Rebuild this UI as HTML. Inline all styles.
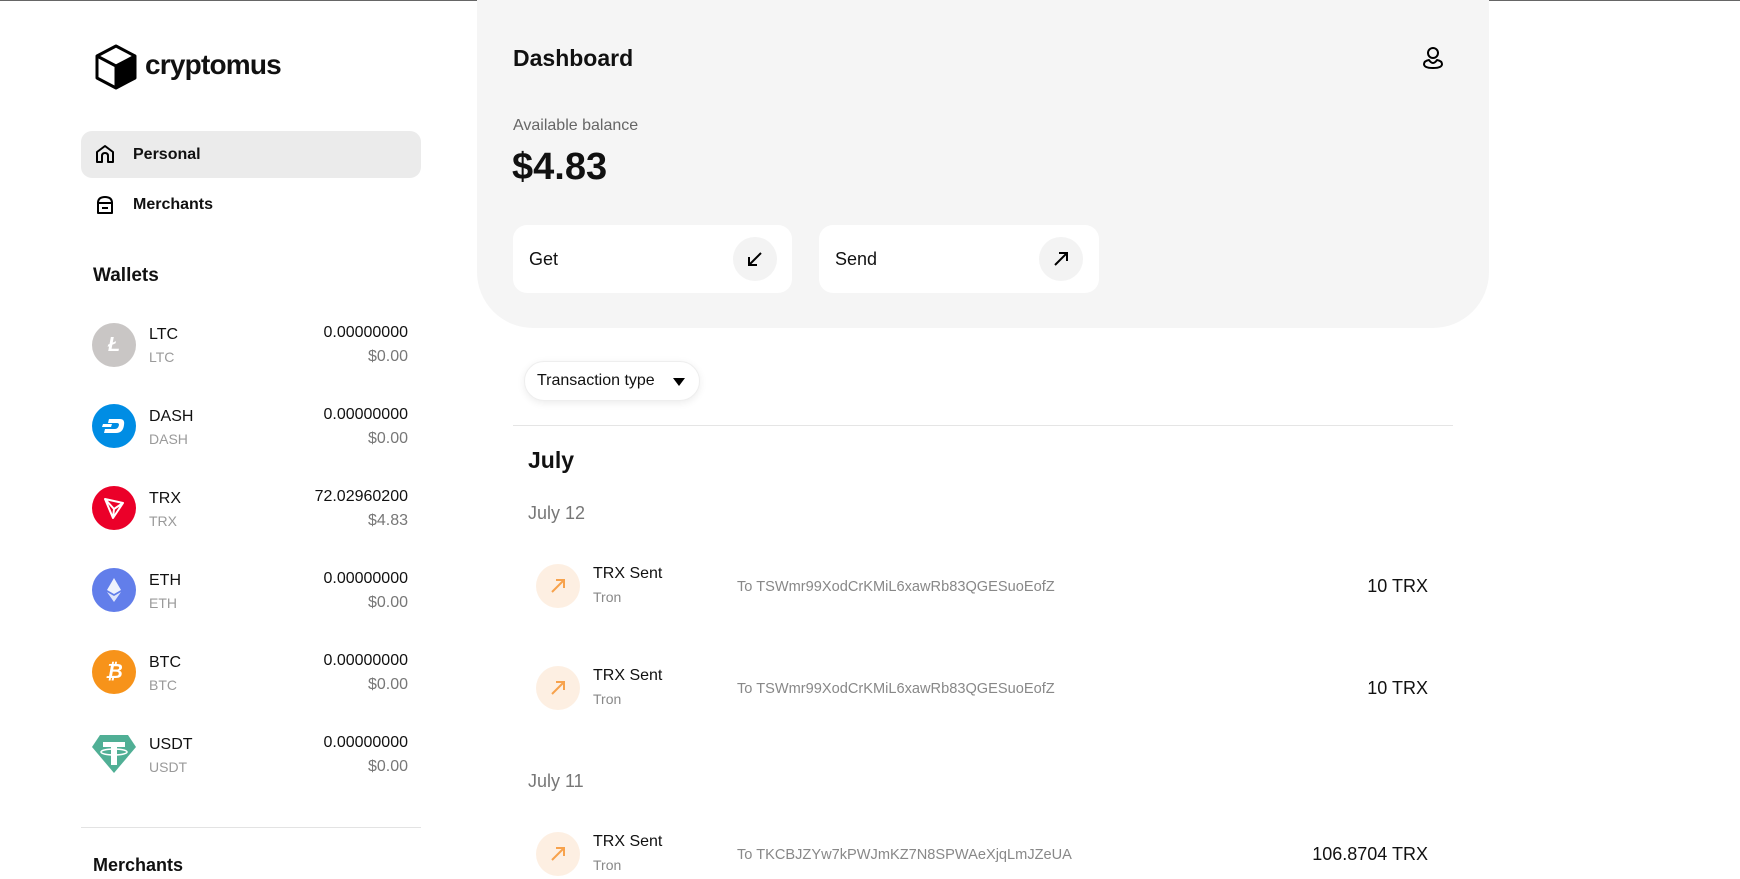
<!DOCTYPE html>
<html><head><meta charset="utf-8"><style>
*{margin:0;padding:0;box-sizing:border-box}
body{width:1740px;height:879px;overflow:hidden;background:#fff;font-family:"Liberation Sans",sans-serif;color:#111;position:relative;border-top:1px solid #666}
.a{position:absolute;white-space:nowrap}
.ic{position:absolute;width:44px;height:44px;border-radius:50%;display:flex;align-items:center;justify-content:center}
.wn{font-size:16px;color:#111}
.ws{font-size:14px;color:#9a9a9a}
.wv{font-size:16px;text-align:right;right:1332px}
.gr{color:#777}
.tx{position:absolute;width:44px;height:44px;border-radius:50%;background:#fdefe2}
</style></head><body>
<svg class="a" style="left:94px;top:43px" width="44" height="46" viewBox="0 0 44 46"><path d="M22 2 L41 12 L41 34 L22 44 L3 34 L3 12 Z" fill="#fff" stroke="#000" stroke-width="3" stroke-linejoin="round"/><path d="M3 12 L22 22 L41 12 M22 22 L22 44" fill="none" stroke="#000" stroke-width="3"/><path d="M22 22 L41 12 L41 34 L22 44Z" fill="#000"/></svg>
<div class="a" style="left:145px;top:48px;font-size:28px;font-weight:bold;letter-spacing:-0.8px">cryptomus</div>
<div class="a" style="left:81px;top:130px;width:340px;height:47px;border-radius:11px;background:#ebebeb"></div>
<svg class="a" style="left:95px;top:143px" width="20" height="20" viewBox="0 0 20 20"><path d="M2 18 V8 L10 2 L18 8 V18 H13 V12 Q13 9 10 9 Q7 9 7 12 V18 Z" fill="none" stroke="#000" stroke-width="2" stroke-linejoin="round"/></svg>
<div class="a" style="left:133px;top:145px;font-size:16px;font-weight:bold">Personal</div>
<svg class="a" style="left:95px;top:194px" width="20" height="20" viewBox="0 0 20 20"><path d="M3 8 Q3 2 10 2 Q17 2 17 8 M2 8 H18 M3 8 V18 H17 V8 M7 13 H13" fill="none" stroke="#000" stroke-width="2" stroke-linejoin="round"/></svg>
<div class="a" style="left:133px;top:195px;font-size:16px;font-weight:bold">Merchants</div>
<div class="a" style="left:93px;top:264px;font-size:19px;font-weight:bold">Wallets</div>

<div class="ic" style="left:92px;top:322px;background:#c9c6c5;color:#fff;font-weight:bold;font-size:20px;font-style:italic">Ł</div>
<div class="a wn" style="left:149px;top:325px">LTC</div><div class="a ws" style="left:149px;top:348px">LTC</div>
<div class="a wv" style="top:323px">0.00000000</div><div class="a wv gr" style="top:347px">$0.00</div>

<div class="ic" style="left:92px;top:403px;background:#008de4"><svg width="26" height="18" viewBox="0 0 26 18"><path d="M8 2 H19 Q24 2 23 8 Q22 16 15 16 H3 L4 12 H14 Q17 12 18 8 Q18 6 16 6 H7 Z M2 7 H11 L10 10 H1 Z" fill="#fff"/></svg></div>
<div class="a wn" style="left:149px;top:407px">DASH</div><div class="a ws" style="left:149px;top:430px">DASH</div>
<div class="a wv" style="top:405px">0.00000000</div><div class="a wv gr" style="top:429px">$0.00</div>

<div class="ic" style="left:92px;top:485px;background:#eb0029"><svg width="24" height="24" viewBox="0 0 24 24"><path d="M3 3 L21 7 L11 22 Z M3 3 L12 13 L21 7 M12 13 L11 22" fill="none" stroke="#fff" stroke-width="2" stroke-linejoin="round"/></svg></div>
<div class="a wn" style="left:149px;top:489px">TRX</div><div class="a ws" style="left:149px;top:512px">TRX</div>
<div class="a wv" style="top:487px">72.02960200</div><div class="a wv gr" style="top:511px">$4.83</div>

<div class="ic" style="left:92px;top:567px;background:#627eea"><svg width="16" height="26" viewBox="0 0 16 26"><path d="M8 1 L15 13 L8 17 L1 13 Z" fill="#fff" opacity=".9"/><path d="M8 19 L15 15 L8 25 L1 15 Z" fill="#fff" opacity=".8"/></svg></div>
<div class="a wn" style="left:149px;top:571px">ETH</div><div class="a ws" style="left:149px;top:594px">ETH</div>
<div class="a wv" style="top:569px">0.00000000</div><div class="a wv gr" style="top:593px">$0.00</div>

<div class="ic" style="left:92px;top:649px;background:#f7931a;color:#fff;font-weight:bold;font-size:20px;font-style:italic">₿</div>
<div class="a wn" style="left:149px;top:653px">BTC</div><div class="a ws" style="left:149px;top:676px">BTC</div>
<div class="a wv" style="top:651px">0.00000000</div><div class="a wv gr" style="top:675px">$0.00</div>

<svg class="a" style="left:92px;top:733px" width="44" height="40" viewBox="0 0 44 40"><path d="M8 1 H36 L44 13 L22 39 L0 13 Z" fill="#50af95"/><path d="M11 8 H33 V13 H25 V31 H19 V13 H11 Z" fill="#fff"/><ellipse cx="22" cy="18" rx="13" ry="3" fill="none" stroke="#fff" stroke-width="1.5"/></svg>
<div class="a wn" style="left:149px;top:735px">USDT</div><div class="a ws" style="left:149px;top:758px">USDT</div>
<div class="a wv" style="top:733px">0.00000000</div><div class="a wv gr" style="top:757px">$0.00</div>

<div class="a" style="left:81px;top:826px;width:340px;height:1px;background:#e3e3e3"></div>
<div class="a" style="left:93px;top:854px;font-size:18px;font-weight:bold">Merchants</div>

<div class="a" style="left:477px;top:-1px;width:1012px;height:328px;background:#f5f5f5;border-radius:0 0 56px 56px"></div>
<div class="a" style="left:513px;top:44px;font-size:23px;font-weight:bold">Dashboard</div>
<svg class="a" style="left:1422px;top:45px" width="22" height="24" viewBox="0 0 22 24"><circle cx="11" cy="7" r="5" fill="none" stroke="#000" stroke-width="2"/><path d="M7 14 Q2 15 2 18 Q2 22 11 22 Q20 22 20 18 Q20 15 15 14 Q13 17 11 17 Q9 17 7 14Z" fill="none" stroke="#000" stroke-width="2" stroke-linejoin="round"/></svg>
<div class="a" style="left:513px;top:116px;font-size:16px;color:#666">Available balance</div>
<div class="a" style="left:512px;top:145px;font-size:38px;font-weight:bold">$4.83</div>

<div class="a" style="left:513px;top:224px;width:279px;height:68px;background:#fff;border-radius:14px"></div>
<div class="a" style="left:529px;top:248px;font-size:18px">Get</div>
<div class="ic" style="left:733px;top:236px;background:#f3f3f3"><svg width="18" height="18" viewBox="0 0 18 18"><path d="M15 3 L3 15 M3 7 V15 H11" fill="none" stroke="#000" stroke-width="2"/></svg></div>
<div class="a" style="left:819px;top:224px;width:280px;height:68px;background:#fff;border-radius:14px"></div>
<div class="a" style="left:835px;top:248px;font-size:18px">Send</div>
<div class="ic" style="left:1039px;top:236px;background:#f3f3f3"><svg width="18" height="18" viewBox="0 0 18 18"><path d="M3 15 L15 3 M7 3 H15 V11" fill="none" stroke="#000" stroke-width="2"/></svg></div>

<div class="a" style="left:524px;top:360px;width:176px;height:40px;border-radius:20px;background:#fff;box-shadow:0 2px 8px rgba(0,0,0,.08);border:1px solid #eee"></div>
<div class="a" style="left:537px;top:371px;font-size:16px">Transaction type</div>
<div class="a" style="left:673px;top:377px;width:0;height:0;border-left:6px solid transparent;border-right:6px solid transparent;border-top:8px solid #000"></div>
<div class="a" style="left:513px;top:424px;width:940px;height:1px;background:#e5e5e5"></div>

<div class="a" style="left:528px;top:446px;font-size:23px;font-weight:bold">July</div>
<div class="a" style="left:528px;top:502px;font-size:18px;color:#777">July 12</div>

<div class="tx" style="left:536px;top:563px"></div>
<svg class="a" style="left:549px;top:576px" width="18" height="18" viewBox="0 0 18 18"><path d="M3 15 L15 3 M7 3 H15 V11" fill="none" stroke="#f7a24c" stroke-width="2"/></svg>
<div class="a" style="left:593px;top:564px;font-size:16px">TRX Sent</div>
<div class="a" style="left:593px;top:588px;font-size:14px;color:#888">Tron</div>
<div class="a" style="left:737px;top:578px;font-size:14.6px;color:#888">To TSWmr99XodCrKMiL6xawRb83QGESuoEofZ</div>
<div class="a" style="right:312px;top:575px;font-size:18px">10 TRX</div>

<div class="tx" style="left:536px;top:665px"></div>
<svg class="a" style="left:549px;top:678px" width="18" height="18" viewBox="0 0 18 18"><path d="M3 15 L15 3 M7 3 H15 V11" fill="none" stroke="#f7a24c" stroke-width="2"/></svg>
<div class="a" style="left:593px;top:666px;font-size:16px">TRX Sent</div>
<div class="a" style="left:593px;top:690px;font-size:14px;color:#888">Tron</div>
<div class="a" style="left:737px;top:680px;font-size:14.6px;color:#888">To TSWmr99XodCrKMiL6xawRb83QGESuoEofZ</div>
<div class="a" style="right:312px;top:677px;font-size:18px">10 TRX</div>

<div class="a" style="left:528px;top:770px;font-size:18px;color:#777">July 11</div>

<div class="tx" style="left:536px;top:831px"></div>
<svg class="a" style="left:549px;top:844px" width="18" height="18" viewBox="0 0 18 18"><path d="M3 15 L15 3 M7 3 H15 V11" fill="none" stroke="#f7a24c" stroke-width="2"/></svg>
<div class="a" style="left:593px;top:832px;font-size:16px">TRX Sent</div>
<div class="a" style="left:593px;top:856px;font-size:14px;color:#888">Tron</div>
<div class="a" style="left:737px;top:846px;font-size:14.6px;color:#888">To TKCBJZYw7kPWJmKZ7N8SPWAeXjqLmJZeUA</div>
<div class="a" style="right:312px;top:843px;font-size:18px">106.8704 TRX</div>
</body></html>
